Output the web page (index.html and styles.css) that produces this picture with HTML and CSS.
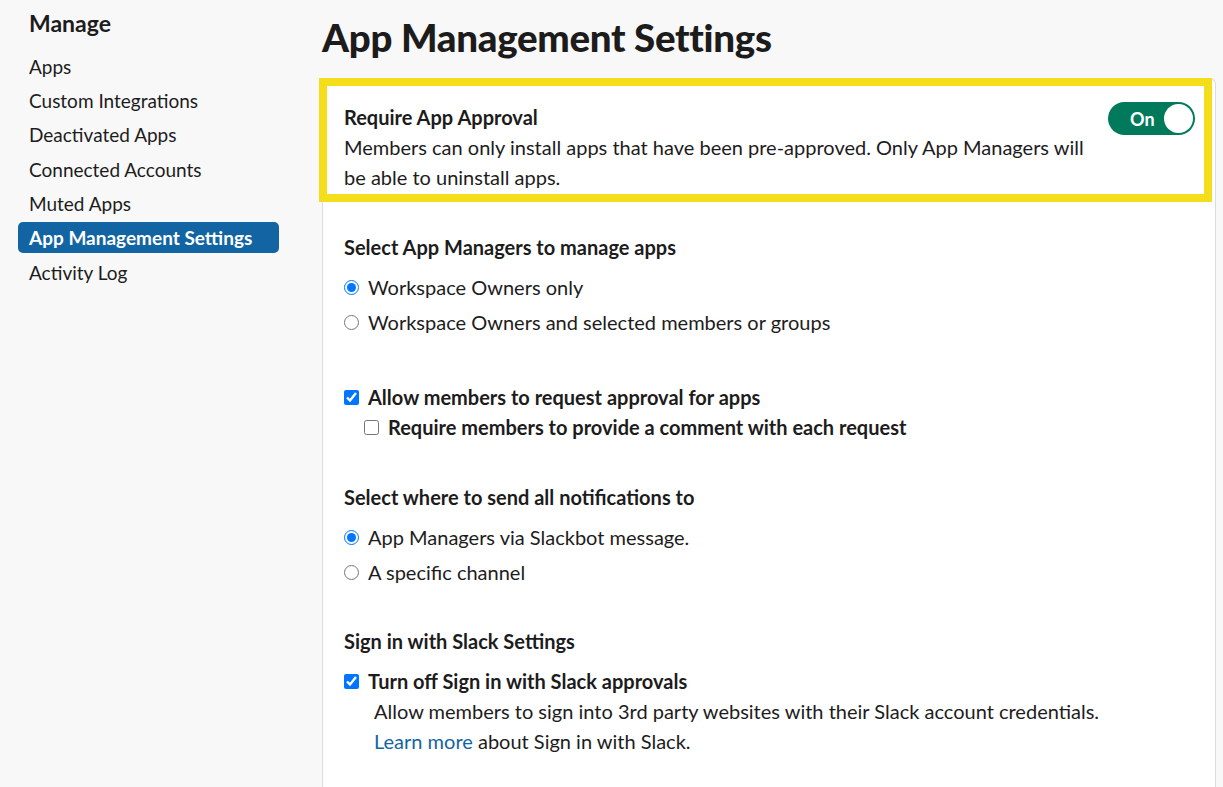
FILE: index.html
```html
<!DOCTYPE html>
<html lang="en">
<head>
    <meta charset="UTF-8">
    <meta name="viewport" content="width=device-width, initial-scale=1.0">
    <title>App Management Settings</title>
    <link rel="stylesheet" href="styles.css">
</head>
<body>
    <div class="page">
        <!-- Menu de gauche -->
        <nav class="sidebar">
            <h2 class="sidebar-title">Manage</h2>
            <ul class="menu">
                <li><a href="#">Apps</a></li>
                <li><a href="#">Custom Integrations</a></li>
                <li><a href="#">Deactivated Apps</a></li>
                <li><a href="#">Connected Accounts</a></li>
                <li><a href="#">Muted Apps</a></li>
                <li class="active"><a href="#">App Management Settings</a></li>
                <li><a href="#">Activity Log</a></li>
            </ul>
        </nav>

        <main class="content">
            <h1>App Management Settings</h1>

            <div class="card">
                <section class="highlight">
                    <div class="highlight-text">
                        <div class="setting-title">Require App Approval</div>
                        <p class="setting-desc">Members can only install apps that have been pre-approved. Only App Managers will be able to uninstall apps.</p>
                    </div>
                    <button class="toggle" type="button">
                        <span class="toggle-label">On</span>
                        <span class="toggle-knob"></span>
                    </button>
                </section>

                <section class="group group-first">
                    <div class="setting-title">Select App Managers to manage apps</div>
                    <label class="option"><input type="radio" name="managers" checked> Workspace Owners only</label>
                    <label class="option"><input type="radio" name="managers"> Workspace Owners and selected members or groups</label>
                </section>

                <section class="group group-checks">
                    <label class="option bold"><input type="checkbox" checked> Allow members to request approval for apps</label>
                    <label class="option bold sub"><input type="checkbox"> Require members to provide a comment with each request</label>
                </section>

                <section class="group">
                    <div class="setting-title">Select where to send all notifications to</div>
                    <label class="option"><input type="radio" name="notify" checked> App Managers via Slackbot message.</label>
                    <label class="option"><input type="radio" name="notify"> A specific channel</label>
                </section>

                <section class="group group-last">
                    <div class="setting-title">Sign in with Slack Settings</div>
                    <label class="option bold"><input type="checkbox" checked> Turn off Sign in with Slack approvals</label>
                    <p class="option-desc">Allow members to sign into 3rd party websites with their Slack account credentials.<br>
                        <a href="#">Learn more</a> about Sign in with Slack.</p>
                </section>
            </div>
        </main>
    </div>
</body>
</html>
```

FILE: styles.css
```css
html {
    overflow: hidden;
}
body {
    margin: 0;
    font-family: Lato, "Noto Sans", sans-serif;
    color: #1d1c1d;
    background-color: #f8f8f8;
}
.page {
    display: flex;
    align-items: flex-start;
}

/* menu de gauche */
.sidebar {
    width: 322px;
    flex-shrink: 0;
    padding: 7px 0 0 18px;
    box-sizing: border-box;
}
.sidebar-title {
    margin: 0 0 10px 11px;
    font-size: 23px;
    font-weight: 700;
    line-height: 32px;
}
.menu {
    list-style: none;
    margin: 0;
    padding: 0;
    width: 261px;
}
.menu li {
    height: 34.33px;
    display: flex;
    align-items: center;
}
.menu a {
    display: block;
    width: 100%;
    padding: 0 11px;
    font-size: 19px;
    line-height: 31px;
    color: #1d1c1d;
    text-decoration: none;
    border-radius: 5px;
}
.menu .active a {
    background-color: #1264a3;
    color: #fff;
    font-weight: 700;
}

/* contenu */
.content {
    flex: 1;
    margin-right: 7px;
}
h1 {
    margin: 14px 0 18px 0;
    font-size: 38.5px;
    font-weight: 900;
    line-height: 46px;
    letter-spacing: -0.3px;
}
.card {
    background-color: #fff;
    border: 1px solid #ddd;
    border-bottom: none;
    border-radius: 6px 6px 0 0;
    padding-bottom: 40px;
}
.highlight {
    display: flex;
    align-items: flex-start;
    gap: 20px;
    margin: -1px 3px 0 -4px;
    padding: 16px 9px 2px 17px;
    border: 8px solid #f4dd1a;
}
.highlight-text {
    flex: 1;
}
.setting-title {
    font-size: 20px;
    font-weight: 700;
    line-height: 30px;
}
.setting-desc {
    margin: 0;
    font-size: 20px;
    line-height: 30px;
}
.toggle {
    display: flex;
    align-items: center;
    justify-content: space-between;
    width: 87px;
    height: 33px;
    padding: 0 2px 0 22px;
    background-color: #007a5a;
    border: none;
    border-radius: 17px;
    cursor: pointer;
}
.toggle-label {
    color: #fff;
    font-family: Lato, sans-serif;
    font-size: 18px;
    font-weight: 700;
}
.toggle-knob {
    width: 29px;
    height: 29px;
    background-color: #fff;
    border-radius: 50%;
}

.group {
    padding: 0 21px;
    margin-top: 40px;
}
.group-first {
    margin-top: 30px;
}
.group-checks {
    margin-top: 45px;
}
.group-last {
    margin-top: 39px;
}
.group .setting-title {
    margin-bottom: 10px;
}
.option {
    display: flex;
    align-items: center;
    gap: 9px;
    font-size: 20px;
    line-height: 30px;
    margin-bottom: 5px;
}
.option input {
    margin: 0;
    width: 15px;
    height: 15px;
}
.bold {
    font-weight: 700;
    margin-bottom: 0;
}
.sub {
    margin-left: 20px;
}
.option-desc {
    margin: 0 0 0 30px;
    font-size: 20px;
    line-height: 30px;
}
.option-desc a {
    color: #1264a3;
    text-decoration: none;
}
```
